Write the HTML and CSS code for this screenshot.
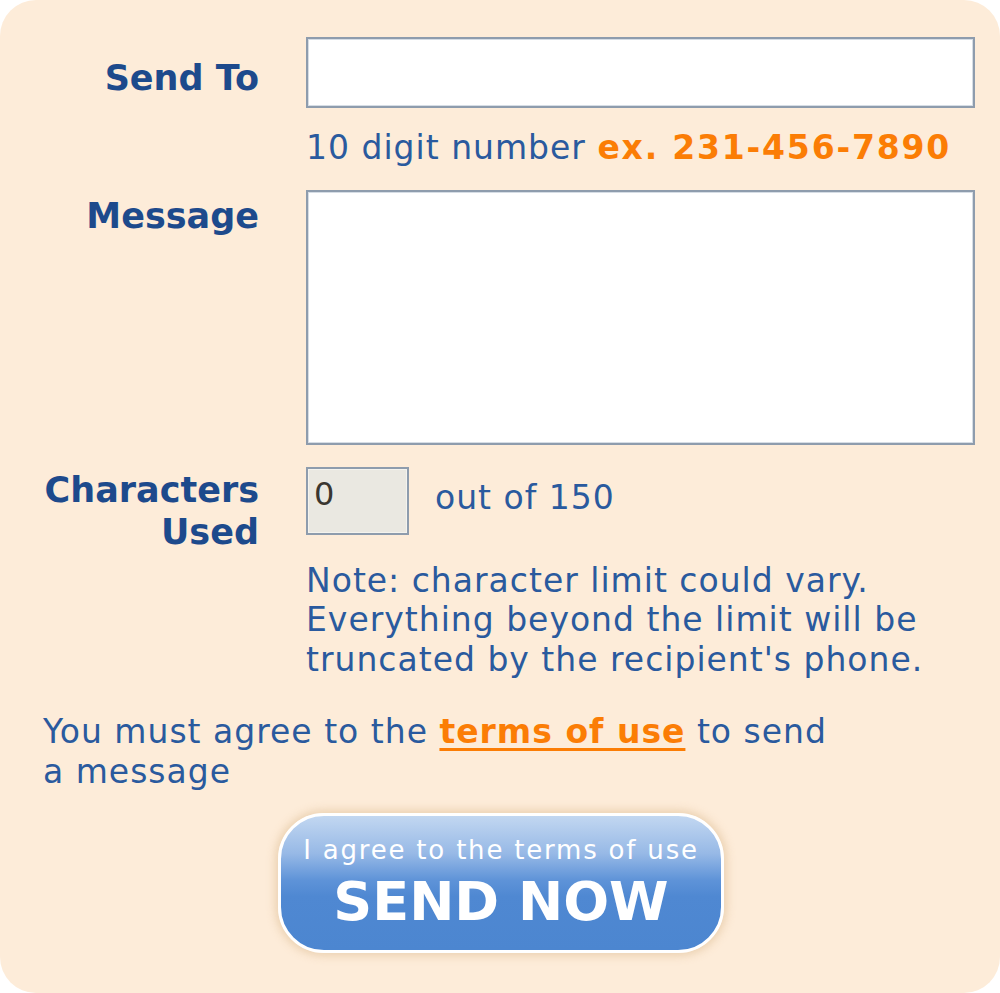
FILE: index.html
```html
<!DOCTYPE html>
<html>
<head>
<meta charset="utf-8">
<title>Send a text message</title>
<link rel="stylesheet" href="styles.css">
</head>
<body>
<form class="panel">
  <div class="grid">
    <label class="label label-sendto" for="to">Send To</label>
    <div class="field">
      <input id="to" class="text-input" type="text">
      <div class="hint">10 digit number <span class="example">ex. 231-456-7890</span></div>
    </div>

    <label class="label label-message" for="msg">Message</label>
    <div class="field">
      <textarea id="msg" class="text-area"></textarea>
    </div>

    <div class="label label-count">Characters<br>Used</div>
    <div class="field">
      <div class="count-row">
        <div class="count-box">0</div>
        <div class="count-text">out of 150</div>
      </div>
      <div class="note">Note: character limit could vary.<br>Everything beyond the limit will be<br>truncated by the recipient's phone.</div>
    </div>
  </div>

  <p class="terms">You must agree to the <a class="terms-link" href="#">terms of use</a> to send a message</p>

  <div class="actions">
    <button class="send-btn" type="button">
      <span class="send-sub">I agree to the terms of use</span>
      <span class="send-main">SEND NOW</span>
    </button>
  </div>
</form>
</body>
</html>
```
FILE: styles.css
```css
* { box-sizing: border-box; }

html, body {
  margin: 0;
  padding: 0;
  background: #ffffff;
}

body {
  font-family: "DejaVu Sans", Verdana, sans-serif;
  color: #2a5a9e;
}

.panel {
  width: 1000px;
  height: 993px;
  margin: 0;
  background: #fdecd9;
  border-radius: 36px;
  padding: 37px 25px 0 43px;
}

.grid {
  display: grid;
  grid-template-columns: 216px 1fr;
  column-gap: 47px;
  row-gap: 22px;
}

.label {
  font-size: 35px;
  font-weight: bold;
  line-height: 42px;
  color: #1d4a8c;
  text-align: right;
  white-space: nowrap;
}

.label-sendto { padding-top: 20px; }
.label-message { padding-top: 5px; }
.label-count { padding-top: 2px; }

.field {
  display: flex;
  flex-direction: column;
}

.text-input,
.text-area {
  display: block;
  width: 100%;
  margin: 0;
  background: #ffffff;
  border: 2px solid #8e9cad;
  box-shadow: inset 0 0 0 1px #d6dde5;
  font-family: inherit;
  font-size: 30px;
}

.text-input { height: 71px; }

.text-area {
  height: 255px;
  resize: none;
}

.hint,
.count-text,
.note,
.terms {
  font-size: 33px;
  line-height: 39.5px;
  letter-spacing: 1px;
}

.hint {
  margin-top: 20px;
  white-space: nowrap;
}

.example {
  font-weight: bold;
  color: #fb7d05;
  letter-spacing: 1.8px;
}

.count-row {
  display: flex;
  align-items: flex-start;
  gap: 26px;
}

.count-box {
  width: 103px;
  height: 68px;
  background: #eae8e1;
  border: 2px solid #8e9cad;
  box-shadow: inset 0 0 0 1px #f4f3ee;
  padding: 6px 0 0 6px;
  font-size: 32px;
  line-height: 38px;
  color: #3a3630;
}

.count-text {
  padding-top: 11px;
}

.note {
  margin-top: 26px;
  white-space: nowrap;
}

.terms {
  margin: 33px 0 0 0;
  width: 800px;
}

.terms-link {
  color: #fb7d05;
  font-weight: bold;
  text-decoration: underline;
  text-underline-offset: 5px;
  text-decoration-thickness: 3px;
}

.actions {
  display: flex;
  justify-content: center;
  margin-top: 22px;
  margin-left: -43px;
  margin-right: -25px;
}

.send-btn {
  width: 446px;
  height: 140px;
  margin: 0 0 0 2px;
  border: 3px solid #ffffff;
  border-radius: 46px;
  padding: 19px 0 0 0;
  background: linear-gradient(to bottom, #c2d7f1 0%, #97b9e6 28%, #5e93d8 48%, #4f88d2 60%, #4c86d0 100%);
  box-shadow: 0 0 8px 3px rgba(214, 178, 130, 0.45);
  display: flex;
  flex-direction: column;
  align-items: center;
  color: #ffffff;
  font-family: "DejaVu Sans", Verdana, sans-serif;
  cursor: pointer;
}

.send-sub {
  display: block;
  font-size: 26px;
  line-height: 30px;
  letter-spacing: 1.8px;
  white-space: nowrap;
}

.send-main {
  display: block;
  margin-top: 7px;
  font-size: 54px;
  font-weight: bold;
  line-height: 60px;
  white-space: nowrap;
}
```
